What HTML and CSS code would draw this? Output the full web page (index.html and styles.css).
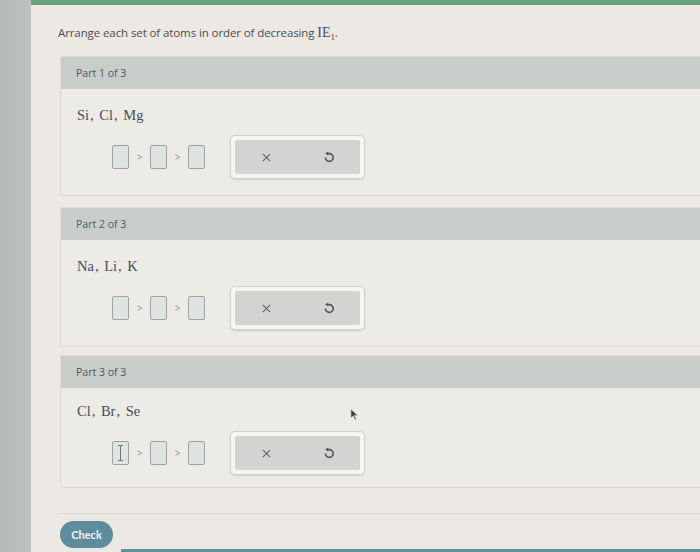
FILE: index.html
```html
<!DOCTYPE html>
<html>
<head>
<meta charset="utf-8">
<link rel="stylesheet" href="styles.css">
</head>
<body>
<div class="screen">
  <div class="side"></div>
  <div class="main">
    <div class="topbar"></div>
    <div class="content">
      <p class="intro">Arrange each set of atoms in order of decreasing <span class="ie">IE<sub>1</sub></span>.</p>

      <section class="part">
        <div class="part-head">Part 1 of 3</div>
        <div class="part-body">
          <div class="atoms">Si<span class="c">,</span> Cl<span class="c">,</span> Mg</div>
          <div class="answer-row">
            <div class="slots">
              <span class="slot"></span><span class="gt">&gt;</span><span class="slot"></span><span class="gt">&gt;</span><span class="slot"></span>
            </div>
            <div class="tools">
              <div class="tools-inner">
                <svg class="ico" viewBox="0 0 12 12"><path d="M2 2L10 10M10 2L2 10" stroke="#5b6062" stroke-width="1.1" fill="none"/></svg>
                <svg class="ico reset" viewBox="0 0 12 12"><path d="M4.6 2.6H6.3A3.9 3.9 0 1 1 2.4 6.5" stroke="#4f5456" stroke-width="1.6" fill="none"/><path d="M2.2 2.6L5.2 0.6L5.2 4.6Z" fill="#4f5456"/></svg>
              </div>
            </div>
          </div>
        </div>
      </section>

      <section class="part">
        <div class="part-head">Part 2 of 3</div>
        <div class="part-body">
          <div class="atoms">Na<span class="c">,</span> Li<span class="c">,</span> K</div>
          <div class="answer-row">
            <div class="slots">
              <span class="slot"></span><span class="gt">&gt;</span><span class="slot"></span><span class="gt">&gt;</span><span class="slot"></span>
            </div>
            <div class="tools">
              <div class="tools-inner">
                <svg class="ico" viewBox="0 0 12 12"><path d="M2 2L10 10M10 2L2 10" stroke="#5b6062" stroke-width="1.1" fill="none"/></svg>
                <svg class="ico reset" viewBox="0 0 12 12"><path d="M4.6 2.6H6.3A3.9 3.9 0 1 1 2.4 6.5" stroke="#4f5456" stroke-width="1.6" fill="none"/><path d="M2.2 2.6L5.2 0.6L5.2 4.6Z" fill="#4f5456"/></svg>
              </div>
            </div>
          </div>
        </div>
      </section>

      <section class="part part-last">
        <div class="part-head">Part 3 of 3</div>
        <div class="part-body">
          <div class="atoms">Cl<span class="c">,</span> Br<span class="c">,</span> Se</div>
          <div class="answer-row">
            <div class="slots">
              <span class="slot active"><span class="ibeam"></span></span><span class="gt">&gt;</span><span class="slot"></span><span class="gt">&gt;</span><span class="slot"></span>
            </div>
            <div class="tools">
              <div class="tools-inner">
                <svg class="ico" viewBox="0 0 12 12"><path d="M2 2L10 10M10 2L2 10" stroke="#5b6062" stroke-width="1.1" fill="none"/></svg>
                <svg class="ico reset" viewBox="0 0 12 12"><path d="M4.6 2.6H6.3A3.9 3.9 0 1 1 2.4 6.5" stroke="#4f5456" stroke-width="1.6" fill="none"/><path d="M2.2 2.6L5.2 0.6L5.2 4.6Z" fill="#4f5456"/></svg>
              </div>
            </div>
          </div>
          <svg class="pointer" viewBox="0 0 10 14"><path d="M1 1L1 11L3.6 8.6L5.6 13L7 12.4L5 8L8.6 8Z" fill="#3d4245" stroke="#f2f0ec" stroke-width="0.6"/></svg>
        </div>
      </section>

      <div class="footer">
        <button class="check">Check</button>
      </div>
    </div>
    <div class="bottombar"></div>
  </div>
</div>
</body>
</html>
```

FILE: styles.css
```css
html, body {
  margin: 0;
  padding: 0;
  background: #ebe8e3;
}
.screen {
  display: flex;
  width: 700px;
  height: 552px;
  overflow: hidden;
  font-family: "Open Sans", "Liberation Sans", sans-serif;
  color: #4a4f52;
}
.side {
  width: 31px;
  flex: none;
  background: linear-gradient(90deg, #b3bbb8, #bcc3c0);
}
.main {
  flex: 1;
  display: flex;
  flex-direction: column;
  background: #ece9e4;
}
.topbar {
  height: 5px;
  flex: none;
  background: #6ba27e;
}
.content {
  flex: 1;
  padding-left: 27px;
}
.intro {
  margin: 19px 0 0 0;
  font-size: 11.5px;
  line-height: 18px;
  color: #4a4e51;
  letter-spacing: -0.1px;
}
.ie {
  font-family: "Liberation Serif", serif;
  font-size: 14px;
}
.ie sub {
  font-size: 9px;
  vertical-align: -3px;
  line-height: 0;
}
.part {
  margin-left: 2px;
  border: 1px solid #d9d9d5;
  border-right: none;
  border-radius: 3px 0 0 4px;
  background: #ecebe6;
}
.part + .part {
  margin-top: 11px;
}
.part:first-of-type {
  margin-top: 14px;
}
.part.part-last {
  margin-top: 8px;
}
.part-head {
  height: 32px;
  line-height: 32px;
  padding-left: 15px;
  font-size: 10.5px;
  color: #50565a;
  background: #c9cdca;
}
.part-body {
  position: relative;
  padding: 16px 0 16px 0;
}
.part-last .part-body {
  padding: 13px 0 12px 0;
}
.atoms {
  padding-left: 16px;
  font-family: "Liberation Serif", serif;
  font-size: 14.5px;
  line-height: 20px;
  color: #4a4e52;
}
.atoms .c {
  margin: 0 2px 0 1px;
}
.answer-row {
  display: flex;
  align-items: center;
  margin-top: 10px;
  padding-left: 51px;
}
.slots {
  display: flex;
  align-items: center;
  width: 118px;
}
.slot {
  position: relative;
  width: 15px;
  height: 22px;
  border: 1.5px solid #97a5a8;
  border-radius: 2px;
  background: #dfe4e1;
}
.gt {
  width: 21px;
  text-align: center;
  font-size: 10px;
  color: #8a9597;
}
.ibeam {
  position: absolute;
  left: 7px;
  top: 3px;
  width: 2px;
  height: 16px;
  border-left: 1px solid #6d7476;
}
.ibeam::before, .ibeam::after {
  content: "";
  position: absolute;
  left: -3px;
  width: 5px;
  border-top: 1px solid #6d7476;
}
.ibeam::before { top: 0; }
.ibeam::after { bottom: 0; }
.tools {
  padding: 4px;
  background: #f6f5f2;
  border: 1px solid #cfd1ce;
  border-radius: 5px;
  box-shadow: 0 1px 2px rgba(0, 0, 0, 0.12);
}
.tools-inner {
  width: 125px;
  height: 34px;
  display: flex;
  align-items: center;
  justify-content: space-around;
  background: #d2d4d2;
  border-radius: 2px;
}
.ico {
  width: 11px;
  height: 11px;
}
.ico.reset {
  width: 12px;
  height: 12px;
}
.pointer {
  position: absolute;
  left: 289px;
  top: 20px;
  width: 9px;
  height: 13px;
}
.footer {
  margin-top: 25px;
  border-top: 1px solid #d8d7d2;
  padding: 7px 0 0 2px;
}
.check {
  display: block;
  width: 53px;
  height: 27px;
  border: none;
  border-radius: 14px;
  background: #5e8c9c;
  color: #f1f5f6;
  font-family: "Lato", "Liberation Sans", sans-serif;
  font-weight: bold;
  font-size: 11px;
  padding: 0;
}
.bottombar {
  height: 3px;
  flex: none;
  margin-left: 90px;
  background: #5f8f98;
}
```
